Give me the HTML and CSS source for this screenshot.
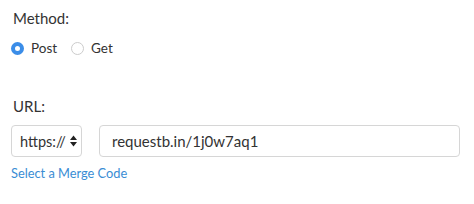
FILE: index.html
```html
<!DOCTYPE html>
<html>
<head>
	<meta charset="utf-8">
	<title>Webhook</title>
	<link rel="stylesheet" href="styles.css">
</head>
<body>
	<form class="webhook">
		<div class="field">
			<div class="field-label">Method:</div>
			<div class="radios">
				<label class="radio"><span class="dot checked"></span>Post</label>
				<label class="radio"><span class="dot"></span>Get</label>
			</div>
		</div>

		<div class="field url-field">
			<div class="field-label">URL:</div>
			<div class="url-row">
				<div class="select">
					<span>https://</span>
					<svg class="arrows" width="7" height="12" viewBox="0 0 7 12"><path d="M3.5 0.5 L7 5 L0 5 Z M3.5 11.5 L7 7 L0 7 Z" fill="#222"/></svg>
				</div>
				<div class="text-input">requestb.in/1j0w7aq1</div>
			</div>
			<a class="merge" href="#">Select a Merge Code</a>
		</div>
	</form>
</body>
</html>
```

FILE: styles.css
```css
body {
	margin: 0;
	background: #fff;
	font-family: Lato, "Open Sans", sans-serif;
	color: #333;
}

.webhook {
	padding: 8px 14px 0 11px;
}

.field-label {
	font-size: 15px;
	line-height: 20px;
	margin-left: 2px;
	margin-bottom: 12px;
}

.url-field .field-label {
	margin-bottom: 9px;
}

.radios {
	display: flex;
	align-items: center;
	gap: 14px;
}

.radio {
	display: flex;
	align-items: center;
	gap: 7px;
	font-size: 13.5px;
	line-height: 16px;
}

.dot {
	width: 11px;
	height: 11px;
	border-radius: 50%;
	border: 1px solid #ccc;
	background: #fff;
	box-sizing: content-box;
}

.dot.checked {
	width: 5px;
	height: 5px;
	border: 4px solid #3b8de8;
	background: #fff;
}

.url-field {
	margin-top: 40px;
}

.url-row {
	display: flex;
	gap: 17px;
	height: 32px;
}

.select {
	display: flex;
	align-items: center;
	justify-content: space-between;
	width: 71px;
	box-sizing: border-box;
	padding: 0 4px 0 8px;
	border: 1px solid #d6d6d6;
	border-radius: 4px;
	font-size: 14.5px;
}

.arrows {
	flex-shrink: 0;
}

.text-input {
	flex: 1;
	display: flex;
	align-items: center;
	box-sizing: border-box;
	padding: 0 12px;
	border: 1px solid #d6d6d6;
	border-radius: 4px;
	font-size: 15px;
}

.merge {
	display: block;
	margin-top: 8px;
	font-size: 12.8px;
	color: #3a8dd4;
	text-decoration: none;
}
```
